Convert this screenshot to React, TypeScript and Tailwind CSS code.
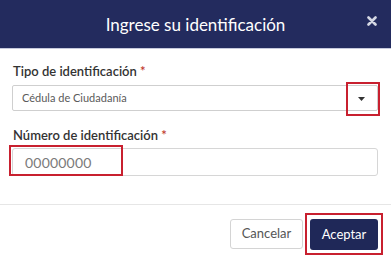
import React from "react";

export default function App() {
  return (
    <div className="w-[391px] h-[260px] bg-white font-['Lato',sans-serif] overflow-hidden">
      <div className="relative h-[49px] bg-[#232b5e] border-b border-[#c5c9dc] flex items-center justify-center">
        <span className="text-white text-[17px] leading-none">Ingrese su identificación</span>
        <svg className="absolute left-[367px] top-[16px]" width="10" height="10" viewBox="0 0 10 10">
          <path d="M1.5 1.5L8.5 8.5M8.5 1.5L1.5 8.5" stroke="#d5d8e4" strokeWidth="2.6" strokeLinecap="round" />
        </svg>
      </div>
      <div className="px-3 pt-[14px] pb-[28px] border-b border-[#e6e6e6]">
        <div className="text-[13px] font-semibold text-[#333] leading-[16px] pl-px">
          Tipo de identificación <span className="text-[#c0392b]">*</span>
        </div>
        <div className="relative mt-[6px] h-[26px] w-[366px] border border-[#cfcfcf] rounded-[2px] flex items-center pl-[9px]">
          <span className="text-[11px] text-[#5a5a5a]">Cédula de Ciudadanía</span>
          <svg className="absolute right-[12px] top-[11px]" width="7" height="4" viewBox="0 0 7 4">
            <path d="M0 0H7L3.5 4Z" fill="#333" />
          </svg>
          <div className="absolute right-[-3px] top-[-4px] w-[34px] h-[34px] border-[2.5px] border-[#c8202f]" />
        </div>
        <div className="mt-[16px] text-[13px] font-semibold text-[#333] leading-[16px] pl-px">
          Número de identificación <span className="text-[#c0392b]">*</span>
        </div>
        <div className="relative mt-[5px] h-[28px] w-[366px] border border-[#d6d6d6] rounded-[3px] flex items-center pl-[12px]">
          <span className="text-[14px] text-[#7a7a7a] tracking-[0.2px]">00000000</span>
          <div className="absolute left-[-4px] top-[-4px] w-[114px] h-[31px] border-[2.5px] border-[#c8202f]" />
        </div>
      </div>
      <div className="flex justify-end gap-[7px] pr-[13px] pt-[14px]">
        <div className="h-[30px] w-[73px] border border-[#d4d4d4] rounded-[3px] flex items-center justify-center text-[13px] text-[#555]">
          Cancelar
        </div>
        <div className="relative h-[31px] w-[68px] bg-[#1f2858] rounded-[3px] flex items-center justify-center text-[13px] text-white">
          Aceptar
          <div className="absolute left-[-5px] top-[-6px] w-[78px] h-[42px] border-[2.5px] border-[#c8202f]" />
        </div>
      </div>
    </div>
  );
}
